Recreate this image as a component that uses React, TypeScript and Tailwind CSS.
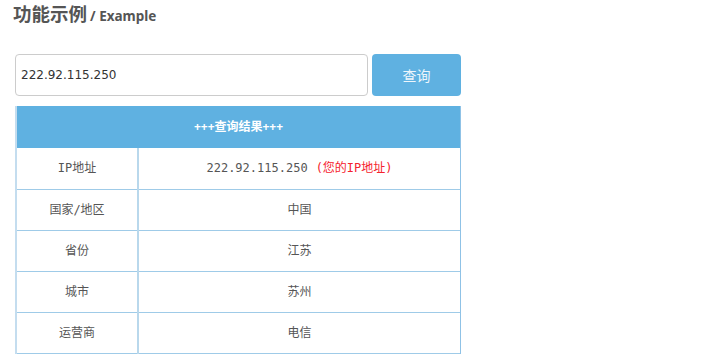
import React from 'react';

const ROWS = [
    { label: 'IP地址', value: '222.92.115.250', note: '(您的IP地址)' },
    { label: '国家/地区', value: '中国' },
    { label: '省份', value: '江苏' },
    { label: '城市', value: '苏州' },
    { label: '运营商', value: '电信' },
];

const cellFont = { fontFamily: '"DejaVu Sans Mono", "Noto Sans CJK SC", monospace' };

export default function App() {
    return (
        <div className="w-[720px] h-[354px] bg-white overflow-hidden" style={{ fontFamily: '"Noto Sans", "Noto Sans CJK SC", sans-serif' }}>
            <h2 className="pl-[13px] h-[54px] text-[#555] font-bold flex items-baseline">
                <span className="text-[18.5px] leading-[28px]">功能示例</span>
                <span className="text-[13.5px] ml-[3px]">/ Example</span>
            </h2>

            <div className="ml-[15px] w-[446px]">
                <div className="flex gap-[4px] h-[42px]">
                    <input
                        type="text"
                        defaultValue="222.92.115.250"
                        className="w-[353px] h-full border border-[#ccc] rounded-[4px] px-[5px] text-[12px] text-[#333] focus:outline-none"
                        style={{ fontFamily: '"DejaVu Sans", sans-serif' }}
                    />
                    <button className="flex-1 rounded-[4px] bg-[#5fb1e1] text-[#eef6fc] text-[14px]">查询</button>
                </div>

                <table className="w-full mt-[10px] border-collapse">
                    <thead>
                        <tr>
                            <th colSpan={2} className="h-[42px] bg-[#5fb1e1] text-white text-[12px] font-bold border-l-2 border-l-[#c4ddef] border-r border-r-[#8fc2e6]">
                                +++查询结果+++
                            </th>
                        </tr>
                    </thead>
                    <tbody className="text-[12px] text-[#555]" style={cellFont}>
                        {ROWS.map((row) => (
                            <tr key={row.label} className="h-[41px] border-b border-[#9fcbe8]">
                                <td className="w-[122px] text-center border-l-2 border-l-[#c4ddef] border-r-2 border-r-[#b9d8ec]">{row.label}</td>
                                <td className="text-center border-r border-r-[#8fc2e6]">
                                    {row.value}
                                    {row.note && <span className="text-[#f5222d] ml-[8px]">{row.note}</span>}
                                </td>
                            </tr>
                        ))}
                    </tbody>
                </table>
            </div>
        </div>
    );
}
